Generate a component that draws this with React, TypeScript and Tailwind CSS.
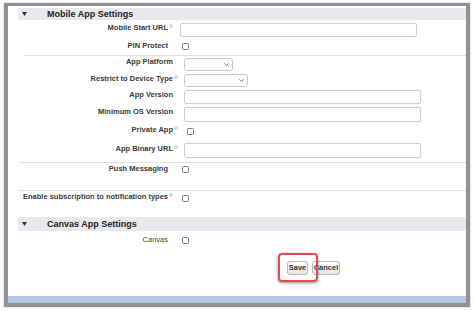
import type { ReactNode } from 'react';

function Help(): JSX.Element {
  return <span className="ml-[1px] -mr-[5px] mt-[1px] h-[4px] w-[4px] shrink-0 rounded-full border border-[#c9c9c9] bg-[#f3f3f3]" />;
}

function Box(): JSX.Element {
  return <span className="block h-[7px] w-[7px] rounded-[1.5px] border border-[#777] bg-white" />;
}

function Chevron(): JSX.Element {
  return (
    <svg width="5" height="3" viewBox="0 0 5 3" className="block">
      <path d="M0.4 0.4 L2.5 2.5 L4.6 0.4" fill="none" stroke="#555" strokeWidth="0.8" />
    </svg>
  );
}

function Row({ className, label, help, labelClass, children }: { className: string; label: string; help?: boolean; labelClass: string; children: ReactNode }): JSX.Element {
  return (
    <div className={`flex shrink-0 items-start ${className}`}>
      <div className={`flex shrink-0 justify-end whitespace-nowrap text-[7.5px] leading-[9px] text-[#3a3a3a] ${labelClass}`}>
        <span>{label}</span>
        {help && <Help />}
      </div>
      {children}
    </div>
  );
}

function Header({ title, className }: { title: string; className: string }): JSX.Element {
  return (
    <div className={`flex shrink-0 items-center bg-[#e8e9ed] ${className}`}>
      <svg width="5" height="4" viewBox="0 0 5 4" className="ml-[4px] block">
        <path d="M0 0 H5 L2.5 4 Z" fill="#333" />
      </svg>
      <span className="ml-[20px] text-[9px] font-bold leading-[12px] text-[#222]">{title}</span>
    </div>
  );
}

export default function App(): JSX.Element {
  return (
    <div className="h-[311px] w-[474px] bg-white pl-[4px] pt-[3px] font-['Liberation_Sans',Arial,sans-serif]">
      <div className="flex h-[304px] w-[466px] flex-col border-b-4 border-l-4 border-r-4 border-t-[3px] border-[#929292] shadow-[0_0_2px_rgba(0,0,0,0.25)]">
        <div className="flex flex-1 flex-col pl-[10px]">
          <Header title="Mobile App Settings" className="mt-[2px] h-[12px]" />

          <Row className="h-[20px]" label="Mobile Start URL" help labelClass="w-[150px] pt-[3px] font-bold">
            <div className="ml-[12px] mt-[3px] h-[14px] w-[237px] rounded-[2px] border border-[#cfcfcf] bg-white" />
          </Row>
          <Row className="h-[15px]" label="PIN Protect" labelClass="w-[150px] pt-[1px] font-bold">
            <div className="ml-[14px] mt-[3px]"><Box /></div>
          </Row>
          <div className="ml-[6px] h-px shrink-0 bg-[#e1e1e1]" />

          <Row className="h-[16px]" label="App Platform" labelClass="w-[155px] pt-[1px] font-bold">
            <div className="ml-[11px] mt-[2px] flex h-[13px] w-[49px] items-center justify-end rounded-[3px] border border-[#c8c8c8] bg-white pr-[3px]">
              <Chevron />
            </div>
          </Row>
          <Row className="h-[16px]" label="Restrict to Device Type" help labelClass="w-[155px] pt-[2px] font-bold">
            <div className="ml-[11px] mt-[2px] flex h-[13px] w-[64px] items-center justify-end rounded-[3px] border border-[#c8c8c8] bg-white pr-[3px]">
              <Chevron />
            </div>
          </Row>
          <Row className="h-[17px]" label="App Version" labelClass="w-[155px] pt-[2px] font-bold">
            <div className="ml-[11px] mt-[2px] h-[14px] w-[237px] rounded-[2px] border border-[#cfcfcf] bg-white" />
          </Row>
          <Row className="h-[18px]" label="Minimum OS Version" labelClass="w-[155px] pt-[2px] font-bold">
            <div className="ml-[11px] mt-[2px] h-[15px] w-[237px] rounded-[2px] border border-[#cfcfcf] bg-white" />
          </Row>
          <Row className="h-[17px]" label="Private App" help labelClass="w-[155px] pt-[2px] font-bold">
            <div className="ml-[14px] mt-[5px]"><Box /></div>
          </Row>
          <Row className="h-[22px]" label="App Binary URL" help labelClass="w-[155px] pt-[4px] font-bold">
            <div className="ml-[11px] mt-[3px] h-[15px] w-[237px] rounded-[2px] border border-[#cfcfcf] bg-white" />
          </Row>
          <div className="h-px shrink-0 bg-[#e1e1e1]" />

          <Row className="h-[27px]" label="Push Messaging" labelClass="w-[150px] pt-[1px] font-bold">
            <div className="ml-[14px] mt-[3px]"><Box /></div>
          </Row>
          <div className="h-px shrink-0 bg-[#e1e1e1]" />
          <Row className="h-[26px]" label="Enable subscription to notification types" help labelClass="w-[150px] pt-[1px] font-bold">
            <div className="ml-[14px] mt-[4px]"><Box /></div>
          </Row>

          <Header title="Canvas App Settings" className="h-[14px]" />
          <Row className="h-[17px]" label="Canvas" labelClass="w-[150px] pt-[4px] font-normal text-[#444]">
            <div className="ml-[14px] mt-[6px]"><Box /></div>
          </Row>

          <div className="ml-[269px] mt-[13px] flex shrink-0 gap-[4px]">
            <div className="relative">
              <button className="flex h-[14px] w-[21px] items-center justify-center rounded-[3px] border border-[#b9b9b9] bg-gradient-to-b from-[#fdfdfd] to-[#e6e6e6] text-[7.5px] font-bold leading-none text-[#333]">
                Save
              </button>
              <div className="absolute -left-[9px] -top-[8px] z-10 h-[29px] w-[40px] rounded-[4px] border-[2.5px] border-[#dc4f4f] shadow-[0_1px_3px_rgba(0,0,0,0.45)]" />
            </div>
            <button className="flex h-[14px] w-[28px] items-center justify-center rounded-[3px] border border-[#b9b9b9] bg-gradient-to-b from-[#fdfdfd] to-[#e6e6e6] text-[7.5px] font-bold leading-none text-[#333]">
              Cancel
            </button>
          </div>
        </div>
        <div className="h-[7px] shrink-0 bg-[#b6c8e3]" />
      </div>
    </div>
  );
}
